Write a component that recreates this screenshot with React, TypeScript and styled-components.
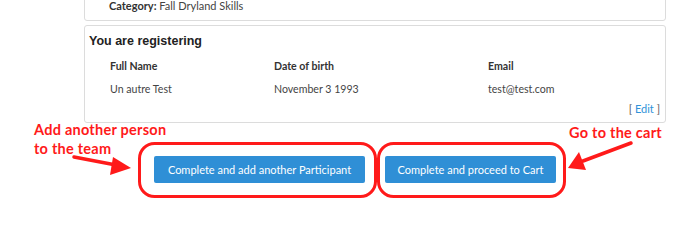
import React from "react";
import styled, { createGlobalStyle } from "styled-components";

const GlobalStyle = createGlobalStyle`
  html, body {
    margin: 0;
    padding: 0;
    background: #fff;
  }
  body {
    font-family: Lato, "Open Sans", sans-serif;
  }
`;

const registrant = {
  fullName: "Un autre Test",
  birth: "November 3 1993",
  email: "test@test.com",
};

const App = (): JSX.Element => {
  return (
    <Page>
      <GlobalStyle />
      <Content>
        <CategoryCard>
          <span className="label">Category:</span> Fall Dryland Skills
        </CategoryCard>
        <RegisterCard>
          <Title>You are registering</Title>
          <InfoGrid>
            <HeadCell>Full Name</HeadCell>
            <HeadCell>Date of birth</HeadCell>
            <HeadCell>Email</HeadCell>
            <Cell>{registrant.fullName}</Cell>
            <Cell>{registrant.birth}</Cell>
            <Cell>{registrant.email}</Cell>
          </InfoGrid>
          <EditRow>
            [ <a href="#">Edit</a> ]
          </EditRow>
        </RegisterCard>
        <Actions>
          <ActionButton $width={211}>Complete and add another Participant</ActionButton>
          <ActionButton $width={171}>Complete and proceed to Cart</ActionButton>
        </Actions>
      </Content>

      <Note style={{ left: 34, top: 120 }}>
        Add another person
        <br />
        to the team
      </Note>
      <Note style={{ left: 569, top: 123 }}>Go to the cart</Note>

      <Marks width="688" height="227" viewBox="0 0 688 227">
        <rect x="139.5" y="143.5" width="236" height="53" rx="15" fill="none" stroke="#ff1a1a" strokeWidth="3" />
        <rect x="378.5" y="143.5" width="186" height="53" rx="15" fill="none" stroke="#ff1a1a" strokeWidth="3" />
        <line x1="74" y1="157" x2="116" y2="165" stroke="#ff1a1a" strokeWidth="3.5" strokeLinecap="round" />
        <polygon points="131,168 113,157 110,175" fill="#ff1a1a" />
        <line x1="631" y1="143" x2="583" y2="161" stroke="#ff1a1a" strokeWidth="3.5" strokeLinecap="round" />
        <polygon points="568,168 579,152 586,170" fill="#ff1a1a" />
      </Marks>
    </Page>
  );
};

const Page = styled.div`
  position: relative;
  width: 688px;
  height: 227px;
  overflow: hidden;
`;

const Content = styled.div`
  display: flex;
  flex-direction: column;
  width: 582px;
  margin-left: 84px;
`;

const CategoryCard = styled.div`
  box-sizing: border-box;
  height: 41px;
  margin-top: -20px;
  padding: 19px 0 0 24px;
  border: 1px solid #dcdcdc;
  border-radius: 3px;
  font-size: 11px;
  line-height: 11px;
  color: #444;

  .label {
    font-weight: 700;
    color: #333;
  }
`;

const RegisterCard = styled.div`
  box-sizing: border-box;
  height: 98px;
  margin-top: 4px;
  padding: 7px 5px 0 4px;
  border: 1px solid #dcdcdc;
  border-radius: 3px;
  display: flex;
  flex-direction: column;
`;

const Title = styled.div`
  font-family: "Liberation Sans", Arial, sans-serif;
  font-size: 12.5px;
  font-weight: 700;
  color: #222;
  line-height: 17px;
`;

const InfoGrid = styled.div`
  display: grid;
  grid-template-columns: 164px 214px 1fr;
  row-gap: 9px;
  padding: 9px 0 0 21px;
  font-size: 10.6px;
  line-height: 14px;
`;

const HeadCell = styled.div`
  font-weight: 700;
  color: #333;
`;

const Cell = styled.div`
  color: #444;
`;

const EditRow = styled.div`
  margin-top: 6px;
  text-align: right;
  font-size: 11px;
  line-height: 14px;
  color: #555;

  a {
    color: #2f93d9;
    text-decoration: none;
  }
`;

const Actions = styled.div`
  display: flex;
  gap: 20px;
  margin-top: 33px;
  padding-left: 70px;
`;

const ActionButton = styled.button<{ $width: number }>`
  width: ${(p) => p.$width}px;
  height: 27px;
  border: none;
  border-radius: 2px;
  background: #2f8fd6;
  color: #fff;
  font-family: Lato, "Open Sans", sans-serif;
  font-size: 11px;
  padding: 0;
  cursor: pointer;
`;

const Note = styled.div`
  position: absolute;
  color: #ff1a1a;
  font-family: Lato, sans-serif;
  font-weight: 700;
  font-size: 14.5px;
  line-height: 19px;
  letter-spacing: 0.25px;
`;

const Marks = styled.svg`
  position: absolute;
  left: 0;
  top: 0;
  pointer-events: none;
`;

export default App;
